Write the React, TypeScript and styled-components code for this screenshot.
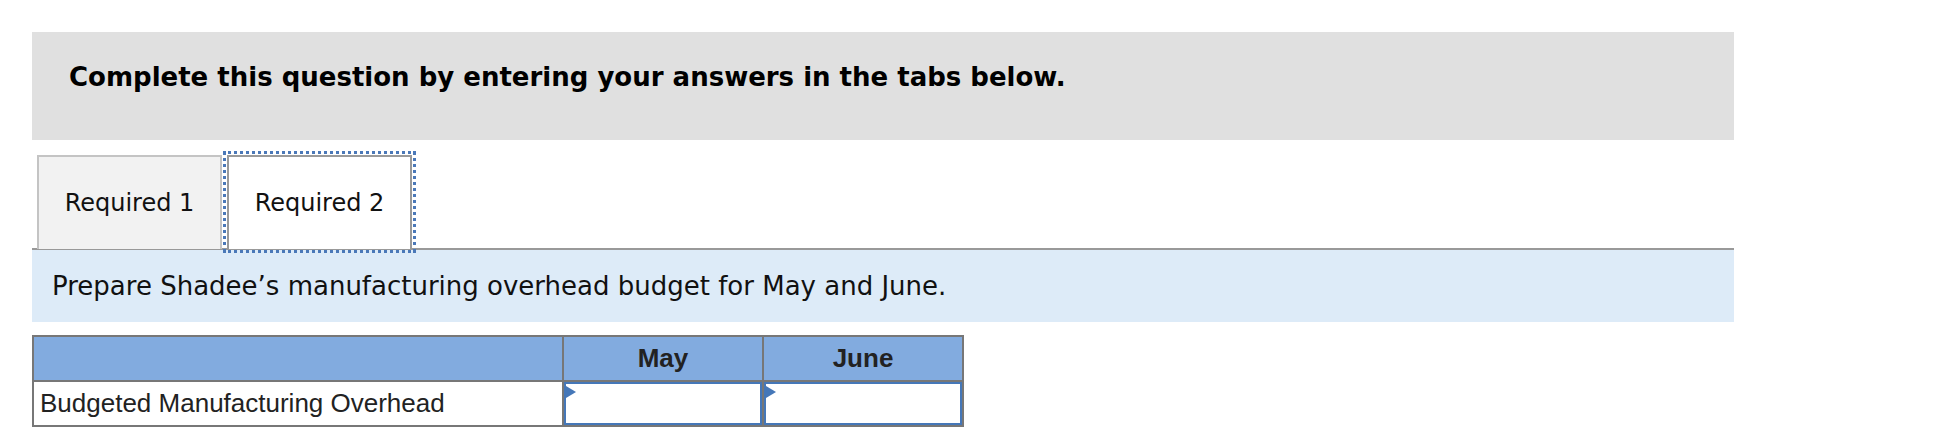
import styled, { createGlobalStyle } from 'styled-components';

const GlobalStyle = createGlobalStyle`
  body {
    margin: 0;
    background: #fff;
    font-family: 'DejaVu Sans', Verdana, sans-serif;
  }
`;

const Page = styled.div`
  padding: 32px 214px 0 32px;
`;

const Banner = styled.div`
  height: 108px;
  box-sizing: border-box;
  background: #e0e0e0;
  padding: 30px 37px;
  h2 {
    margin: 0;
    font-size: 26px;
    font-weight: bold;
    color: #000;
  }
`;

const TabBar = styled.div`
  display: flex;
  align-items: flex-end;
  margin-top: 15px;
  border-bottom: 2px solid #999;
`;

const Tab = styled.div<{ $active?: boolean }>`
  display: flex;
  align-items: center;
  justify-content: center;
  width: 185px;
  height: 94px;
  box-sizing: border-box;
  margin-left: 5px;
  margin-bottom: -1px;
  font-size: 24px;
  color: #111;
  cursor: pointer;
  background: ${(p) => (p.$active ? '#fff' : '#f2f2f2')};
  border: 2px solid ${(p) => (p.$active ? '#9a9a9a' : '#c4c4c4')};
  border-bottom: none;
  outline: ${(p) => (p.$active ? '3px dotted #4a78b8' : 'none')};
  outline-offset: 1px;
`;

const Instruction = styled.div`
  height: 72px;
  box-sizing: border-box;
  display: flex;
  align-items: center;
  padding-left: 20px;
  background: #ddebf8;
  font-size: 26px;
  color: #111;
`;

const Grid = styled.table`
  margin-top: 13px;
  border-collapse: collapse;
  font-family: 'Liberation Sans', Arial, sans-serif;
  color: #222;
  th,
  td {
    border: 2px solid #777;
    padding: 0;
    height: 43px;
  }
  th {
    background: #82abdf;
    font-size: 26px;
    font-weight: bold;
    text-align: center;
  }
`;

const LabelCell = styled.td`
  width: 516px;
  padding: 0 6px !important;
  font-size: 26px;
  background: #fff;
`;

const InputCell = styled.td`
  width: 198px;
  background: #fff;
`;

const InputBox = styled.div`
  position: relative;
  height: 43px;
  box-sizing: border-box;
  border: 2px solid #4577b8;
  &::before {
    content: '';
    position: absolute;
    left: 0;
    top: 2px;
    border-top: 6px solid transparent;
    border-bottom: 6px solid transparent;
    border-left: 10px solid #4577b8;
  }
`;

const months = ['May', 'June'];

const App = () => {
  return (
    <>
      <GlobalStyle />
      <Page>
        <Banner>
          <h2>Complete this question by entering your answers in the tabs below.</h2>
        </Banner>
        <TabBar>
          <Tab>Required 1</Tab>
          <Tab $active>Required 2</Tab>
        </TabBar>
        <Instruction>Prepare Shadee’s manufacturing overhead budget for May and June.</Instruction>
        <Grid>
          <thead>
            <tr>
              <th></th>
              {months.map((m) => (
                <th key={m}>{m}</th>
              ))}
            </tr>
          </thead>
          <tbody>
            <tr>
              <LabelCell>Budgeted Manufacturing Overhead</LabelCell>
              {months.map((m) => (
                <InputCell key={m}>
                  <InputBox />
                </InputCell>
              ))}
            </tr>
          </tbody>
        </Grid>
      </Page>
    </>
  );
};

export default App;
